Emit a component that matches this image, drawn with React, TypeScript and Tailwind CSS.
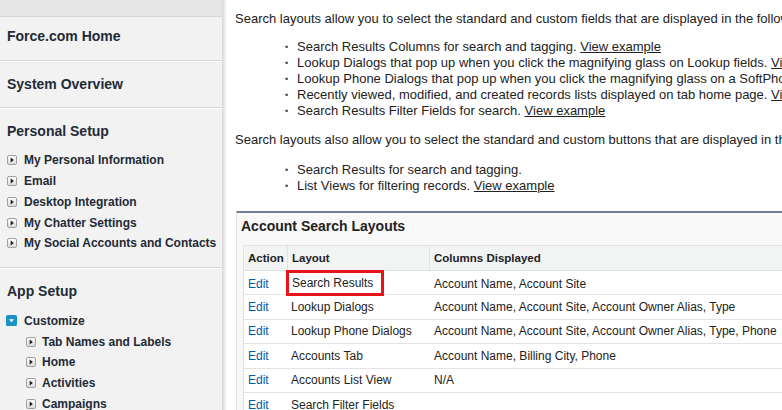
import React from "react";

const GrayArrow = () => (
  <svg width="10" height="10" viewBox="0 0 10 10" className="shrink-0">
    <defs>
      <linearGradient id="grayBox" x1="0" y1="0" x2="0" y2="1">
        <stop offset="0" stopColor="#ffffff" />
        <stop offset="1" stopColor="#d9d9d9" />
      </linearGradient>
    </defs>
    <rect x="0.5" y="0.5" width="9" height="9" rx="1.5" fill="url(#grayBox)" stroke="#a0a0a0" />
    <path d="M3.7 2.6 L6.8 5 L3.7 7.4 Z" fill="#1c1c1c" />
  </svg>
);

const BlueArrow = () => (
  <svg width="11" height="11" viewBox="0 0 11 11" className="shrink-0">
    <rect x="0" y="0" width="11" height="11" rx="1.5" fill="#1b92c4" />
    <path d="M2.9 4.2 L8.1 4.2 L5.5 7.2 Z" fill="#ffffff" />
  </svg>
);

const personal = [
  "My Personal Information",
  "Email",
  "Desktop Integration",
  "My Chatter Settings",
  "My Social Accounts and Contacts",
];

const customize = ["Tab Names and Labels", "Home", "Activities", "Campaigns"];

const fieldBullets = [
  { text: "Search Results Columns for search and tagging.", link: "View example" },
  { text: "Lookup Dialogs that pop up when you click the magnifying glass on Lookup fields.", link: "View example" },
  { text: "Lookup Phone Dialogs that pop up when you click the magnifying glass on a SoftPhone.", link: "View example" },
  { text: "Recently viewed, modified, and created records lists displayed on tab home page.", link: "View example" },
  { text: "Search Results Filter Fields for search.", link: "View example" },
];

const buttonBullets = [
  { text: "Search Results for search and tagging.", link: "" },
  { text: "List Views for filtering records.", link: "View example" },
];

const rows = [
  { layout: "Search Results", cols: "Account Name, Account Site", marked: true },
  { layout: "Lookup Dialogs", cols: "Account Name, Account Site, Account Owner Alias, Type" },
  { layout: "Lookup Phone Dialogs", cols: "Account Name, Account Site, Account Owner Alias, Type, Phone" },
  { layout: "Accounts Tab", cols: "Account Name, Billing City, Phone" },
  { layout: "Accounts List View", cols: "N/A" },
  { layout: "Search Filter Fields", cols: "" },
];

function Bullets({ items }: { items: { text: string; link: string }[] }) {
  return (
    <ul className="pl-[50px]">
      {items.map((b) => (
        <li key={b.text} className="flex h-[16px] items-center whitespace-nowrap">
          <span className="w-[12px] shrink-0 text-[9px] text-[#444]">•</span>
          <span>
            {b.text}
            {b.link && (
              <>
                {" "}
                <a className="underline">{b.link}</a>
              </>
            )}
          </span>
        </li>
      ))}
    </ul>
  );
}

export default function App() {
  return (
    <div className="flex h-[410px] w-[782px] overflow-hidden bg-white font-['Liberation_Sans',Arial,sans-serif]">
      <aside className="flex w-[222px] shrink-0 flex-col overflow-hidden bg-[#f2f2f2] text-[#222a36]">
        <div className="h-[17px] shrink-0 border-b border-b-[#d8d8d8] bg-[#e6e6e6]" />
        <div className="flex h-[44px] shrink-0 items-center border-b border-b-[#d8d8d8] pb-[4px] pl-[7px] text-[14px] font-bold">
          Force.com Home
        </div>
        <div className="flex h-[47px] shrink-0 items-center border-b border-t border-b-[#d8d8d8] border-t-white pl-[7px] text-[14px] font-bold">
          System Overview
        </div>
        <div className="h-[160px] shrink-0 border-b border-t border-b-[#d8d8d8] border-t-white pt-[13px]">
          <div className="pl-[7px] text-[14px] font-bold leading-[18px]">Personal Setup</div>
          <div className="mt-[10px]">
            {personal.map((p) => (
              <div key={p} className="flex h-[20.75px] items-center gap-[7px] pl-[7px] text-[12px] font-bold">
                <GrayArrow />
                {p}
              </div>
            ))}
          </div>
        </div>
        <div className="shrink-0 border-t border-t-white pt-[13px]">
          <div className="pl-[7px] text-[14px] font-bold leading-[18px]">App Setup</div>
          <div className="mt-[10.6px]">
            <div className="flex h-[20.75px] items-center gap-[7px] pl-[6px] text-[12px] font-bold">
              <BlueArrow />
              Customize
            </div>
            {customize.map((c) => (
              <div key={c} className="flex h-[20.75px] items-center gap-[6px] pl-[26px] text-[12px] font-bold">
                <GrayArrow />
                {c}
              </div>
            ))}
          </div>
        </div>
      </aside>
      <div className="w-[5px] shrink-0 bg-gradient-to-r from-[#d6d6d6] to-white" />

      <main className="min-w-0 flex-1 overflow-hidden pl-[8px] pt-[11px] text-[13px] leading-[16px] text-[#222]">
        <p className="whitespace-nowrap">
          Search layouts allow you to select the standard and custom fields that are displayed in the following:
        </p>
        <div className="mt-[12px]">
          <Bullets items={fieldBullets} />
        </div>
        <p className="mt-[13px] whitespace-nowrap">
          Search layouts also allow you to select the standard and custom buttons that are displayed in the following:
        </p>
        <div className="mt-[14px]">
          <Bullets items={buttonBullets} />
        </div>

        <section className="ml-[1px] mt-[17px] w-[700px] border-l border-t-[2px] border-l-[#e3e3e3] border-t-[#747d94] bg-[#f8f8f8] pl-[4px]">
          <h2 className="flex h-[32px] items-center pb-[6px] text-[14px] font-bold text-[#222]">
            Account Search Layouts
          </h2>
          <div className="ml-[2px] border-l border-t border-[#e0e3e5] bg-white text-[12px]">
            <div className="grid h-[25px] grid-cols-[43px_142px_1fr] border-b border-[#e0e3e5] bg-[#f2f3f3] text-[11.5px] font-bold text-[#222]">
              <div className="flex items-center pl-[4px]">Action</div>
              <div className="flex items-center border-l border-[#e0e3e5] pl-[4px]">Layout</div>
              <div className="flex items-center border-l border-[#e0e3e5] pl-[4px]">Columns Displayed</div>
            </div>
            {rows.map((r) => (
              <div key={r.layout} className="grid h-[24.4px] grid-cols-[43px_142px_1fr] border-b border-[#e3e3e3]">
                <div className="flex items-center pl-[4px] text-[#015ba7]">Edit</div>
                <div className="flex items-center">
                  {r.marked ? (
                    <span className="-ml-[1px] -mt-[1px] flex h-[26px] w-[98px] items-center self-start border-[3px] border-[#e8141c] pl-[3px]">
                      {r.layout}
                    </span>
                  ) : (
                    <span className="pl-[4px]">{r.layout}</span>
                  )}
                </div>
                <div className="flex items-center whitespace-nowrap pl-[5px]">{r.cols}</div>
              </div>
            ))}
          </div>
        </section>
      </main>
    </div>
  );
}
